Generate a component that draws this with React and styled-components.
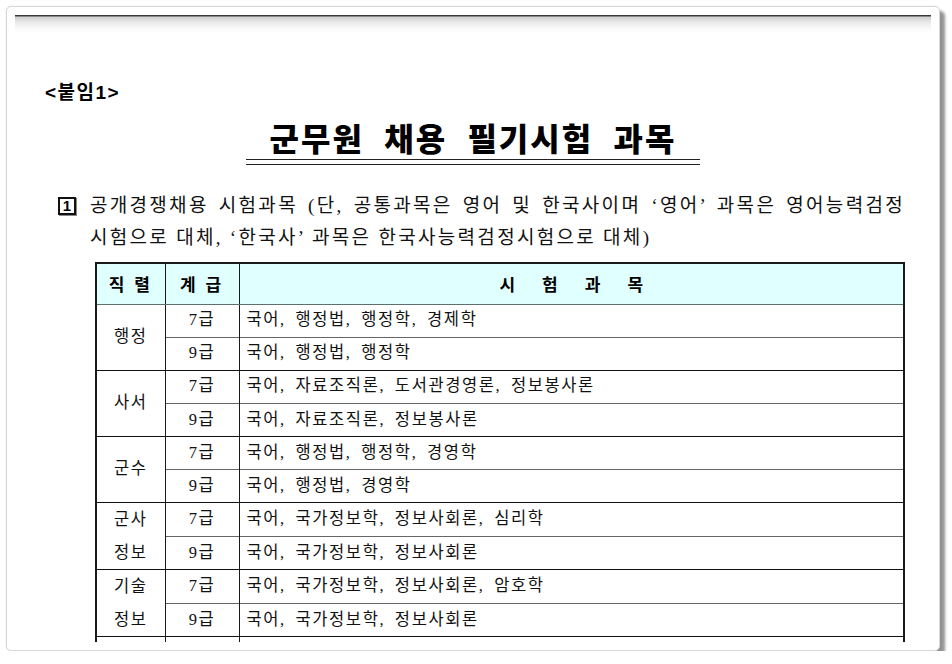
import React from "react";
import styled, { createGlobalStyle } from "styled-components";

const Global = createGlobalStyle`
  html, body { margin: 0; padding: 0; background: #fff; }
  body { font-family: "Liberation Serif", "Noto Sans CJK KR", serif; color: #111; }
  * { box-sizing: border-box; }
`;

const Frame = styled.div`
  padding: 6px 0 0 6px;
`;

const Card = styled.div`
  width: 934px;
  height: 645px;
  padding: 8px;
  border: 1px solid #d8d8d8;
  border-radius: 5px;
  background: #fff;
  box-shadow: 0 0 2px rgba(0, 0, 0, 0.12), 5px 5px 3px rgba(0, 0, 0, 0.42);
`;

const Sheet = styled.div`
  width: 916px;
  height: 627px;
  overflow: hidden;
  padding-top: 66px;
  background: linear-gradient(
    to bottom,
    #2a2a2a 0px,
    #444 1px,
    #cfcfcf 2px,
    #ececec 8px,
    #fafafa 14px,
    #fff 18px
  );
`;

const Label = styled.div`
  margin-left: 30px;
  font: 700 19px/24px "Liberation Sans", "Noto Sans CJK KR", sans-serif;
  letter-spacing: 1.5px;
  color: #000;
`;

const TitleWrap = styled.div`
  width: 454px;
  margin: 14px auto 0;
  text-align: center;
`;

const Title = styled.h1`
  margin: 0;
  font: 900 32px/36px "Noto Sans CJK KR", sans-serif;
  letter-spacing: 2px;
  word-spacing: 11px;
  color: #000;
`;

const DoubleRule = styled.div`
  margin-top: 4px;
  height: 6px;
  border-top: 1.5px solid #222;
  border-bottom: 1.5px solid #222;
`;

const Section = styled.div`
  display: flex;
  gap: 14px;
  margin: 25px 0 0 43px;
`;

const NumBox = styled.span`
  flex: none;
  width: 18px;
  height: 18px;
  margin-top: 7px;
  border: 2px solid #111;
  box-shadow: 1px 1px 0 #888;
  font: 700 15px/14px "Liberation Sans", sans-serif;
  text-align: center;
  color: #000;
`;

const Para = styled.div`
  width: 815px;
  font-size: 19px;
  line-height: 32px;
  letter-spacing: 2.3px;
  color: #111;
`;

const JustLine = styled.div`
  text-align: justify;
  text-align-last: justify;
`;

const Table = styled.table`
  margin: 8px 0 0 80px;
  width: 810px;
  border-collapse: collapse;
  table-layout: fixed;
  border: 2px solid #1a1a1a;
`;

const Th = styled.th`
  height: 41px;
  padding: 0 0 0 ${(p) => p.$padL || 0}px;
  background: #e0ffff;
  border-right: 1.5px solid #1a1a1a;
  border-bottom: 1.5px solid #5d7070;
  font: 700 17px/1 "Noto Sans CJK KR", sans-serif;
  letter-spacing: ${(p) => p.$ls || 3}px;
  color: #000;
  text-align: center;
`;

const Tr = styled.tr`
  height: 33.1px;
  border-top: ${(p) => (p.$group ? "1.5px solid #111" : "1.5px solid #666")};
`;

const Td = styled.td`
  padding: 0 0 0 ${(p) => (p.$left ? 7 : 0)}px;
  border-right: 1.5px solid #1a1a1a;
  font-size: 16.5px;
  line-height: ${(p) => (p.$stack ? "33.1px" : "1")};
  letter-spacing: ${(p) => (p.$left ? 1.6 : 1.5)}px;
  word-spacing: ${(p) => (p.$left ? 4 : 0)}px;
  white-space: pre-line;
  text-align: ${(p) => (p.$left ? "left" : "center")};
  vertical-align: middle;
  color: #111;
`;

const groups = [
  {
    name: "행정",
    rows: [
      ["7급", "국어, 행정법, 행정학, 경제학"],
      ["9급", "국어, 행정법, 행정학"],
    ],
  },
  {
    name: "사서",
    rows: [
      ["7급", "국어, 자료조직론, 도서관경영론, 정보봉사론"],
      ["9급", "국어, 자료조직론, 정보봉사론"],
    ],
  },
  {
    name: "군수",
    rows: [
      ["7급", "국어, 행정법, 행정학, 경영학"],
      ["9급", "국어, 행정법, 경영학"],
    ],
  },
  {
    name: "군사\n정보",
    stack: true,
    rows: [
      ["7급", "국어, 국가정보학, 정보사회론, 심리학"],
      ["9급", "국어, 국가정보학, 정보사회론"],
    ],
  },
  {
    name: "기술\n정보",
    stack: true,
    rows: [
      ["7급", "국어, 국가정보학, 정보사회론, 암호학"],
      ["9급", "국어, 국가정보학, 정보사회론"],
    ],
  },
  {
    name: "",
    rows: [["", ""]],
  },
];

export default function App() {
  return (
    <>
      <Global />
      <Frame>
        <Card>
          <Sheet>
            <Label>&lt;붙임1&gt;</Label>
            <TitleWrap>
              <Title>군무원 채용 필기시험 과목</Title>
              <DoubleRule />
            </TitleWrap>
            <Section>
              <NumBox>1</NumBox>
              <Para>
                <JustLine>
                  공개경쟁채용 시험과목 (단, 공통과목은 영어 및 한국사이며 ‘영어’ 과목은 영어능력검정
                </JustLine>
                <div>시험으로 대체, ‘한국사’ 과목은 한국사능력검정시험으로 대체)</div>
              </Para>
            </Section>
            <Table>
              <colgroup>
                <col style={{ width: 69 }} />
                <col style={{ width: 74 }} />
                <col />
              </colgroup>
              <thead>
                <tr>
                  <Th>직 렬</Th>
                  <Th>계 급</Th>
                  <Th $ls={27} $padL={27}>
                    시험과목
                  </Th>
                </tr>
              </thead>
              <tbody>
                {groups.map((g, gi) =>
                  g.rows.map((r, ri) => (
                    <Tr key={`${gi}-${ri}`} $group={ri === 0}>
                      {ri === 0 && (
                        <Td rowSpan={g.rows.length} $stack={g.stack}>
                          {g.name}
                        </Td>
                      )}
                      <Td>{r[0]}</Td>
                      <Td $left>{r[1]}</Td>
                    </Tr>
                  ))
                )}
              </tbody>
            </Table>
          </Sheet>
        </Card>
      </Frame>
    </>
  );
}
